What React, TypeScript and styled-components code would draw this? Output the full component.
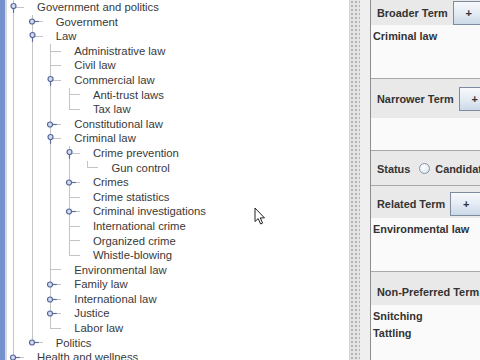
import React from "react";
import styled, { createGlobalStyle } from "styled-components";

type TNode = { label: string; kids?: TNode[]; shut?: boolean };
type Row = {
  label: string;
  rails: boolean[];
  last: boolean;
  handle: "open" | "shut" | null;
};

const tree: TNode[] = [
  {
    label: "Government and politics",
    kids: [
      { label: "Government", shut: true },
      {
        label: "Law",
        kids: [
          { label: "Administrative law" },
          { label: "Civil law" },
          {
            label: "Commercial law",
            kids: [{ label: "Anti-trust laws" }, { label: "Tax law" }],
          },
          { label: "Constitutional law", shut: true },
          {
            label: "Criminal law",
            kids: [
              { label: "Crime prevention", kids: [{ label: "Gun control" }] },
              { label: "Crimes", shut: true },
              { label: "Crime statistics" },
              { label: "Criminal investigations", shut: true },
              { label: "International crime" },
              { label: "Organized crime" },
              { label: "Whistle-blowing" },
            ],
          },
          { label: "Environmental law" },
          { label: "Family law", shut: true },
          { label: "International law", shut: true },
          { label: "Justice", shut: true },
          { label: "Labor law" },
        ],
      },
      { label: "Politics", shut: true },
    ],
  },
  { label: "Health and wellness", shut: true },
];

// top level keeps going above and below the visible part, so it is never "last"
const flatten = (nodes: TNode[], rails: boolean[], out: Row[]) => {
  nodes.forEach((n, i) => {
    const last = rails.length > 0 && i === nodes.length - 1;
    const handle = n.kids ? "open" : n.shut ? "shut" : null;
    out.push({ label: n.label, rails, last, handle });
    if (n.kids) flatten(n.kids, [...rails, !last], out);
  });
  return out;
};

const rows = flatten(tree, [], []);

const Global = createGlobalStyle`
  html, body {
    margin: 0;
    padding: 0;
    overflow: hidden;
    background: #ffffff;
  }
`;

const Frame = styled.div`
  position: relative;
  display: flex;
  width: 480px;
  height: 360px;
  overflow: hidden;
  background: #ffffff;
`;

const TreePane = styled.div`
  flex: 0 0 350px;
  box-sizing: border-box;
  border-left: 5px solid #7592cf;
  border-right: 1px solid #d2d2d2;
  box-shadow: inset 2px 0 0 #dadada;
  padding-left: 2px;
  overflow: hidden;
  background: #ffffff;
  font-family: "Liberation Sans", Arial, sans-serif;
  font-size: 11.3px;
  color: #3a3a3a;
`;

const TreeRow = styled.div`
  display: flex;
  height: 14.6px;
`;

const lineColor = "#c4c4c4";
const rule = `linear-gradient(${lineColor}, ${lineColor})`;

const Rail = styled.span<{ $on: boolean }>`
  flex: 0 0 18.6px;
  background: ${(p) => (p.$on ? `${rule} 6px 0 / 1px 100% no-repeat` : "none")};
`;

const Joint = styled.span<{ $last: boolean }>`
  flex: 0 0 18.6px;
  display: flex;
  align-items: center;
  background: ${(p) => `${rule} 6px 0 / 1px ${p.$last ? "50%" : "100%"} no-repeat`},
    ${rule} 6px 50% / 11px 1px no-repeat;

  svg {
    display: block;
    flex-shrink: 0;
  }
`;

const Label = styled.span`
  margin-left: 11.5px;
  line-height: 14.6px;
  white-space: nowrap;
`;

const Handle: React.FC<{ open: boolean }> = ({ open }) => (
  <svg width="13" height="13" viewBox="0 0 13 13">
    {open ? (
      <>
        <line x1="6.5" y1="7.4" x2="6.5" y2="11.8" stroke="#5d6c9c" strokeWidth="1.2" />
        <circle cx="6.5" cy="5" r="2.5" fill="#d3dcee" stroke="#56669a" strokeWidth="1.2" />
      </>
    ) : (
      <>
        <line x1="8.4" y1="6.5" x2="12.8" y2="6.5" stroke="#5d6c9c" strokeWidth="1.2" />
        <circle cx="6" cy="6.5" r="2.5" fill="#d3dcee" stroke="#56669a" strokeWidth="1.2" />
      </>
    )}
  </svg>
);

const Divider = styled.div`
  flex: 0 0 20px;
  display: flex;
  background: #efefef;
`;

const Grip = styled.div`
  flex: 0 0 10px;
  background-color: #e4e4e4;
  background-image: radial-gradient(circle, #b4b4b4 0.9px, transparent 1.2px);
  background-size: 4px 4px;
`;

const Panel = styled.div`
  flex: 1;
  min-width: 0;
  display: flex;
  flex-direction: column;
  border-left: 1px solid #8e8e8e;
  background: #e9e9e9;
  overflow: hidden;
  font-family: "Liberation Sans", Arial, sans-serif;
  font-size: 10.9px;
  font-weight: bold;
  color: #333333;
`;

const Section = styled.div<{ $grow?: boolean }>`
  display: flex;
  flex-direction: column;
  flex: ${(p) => (p.$grow ? "1" : "0 0 auto")};
  & + & {
    border-top: 1px solid #a8a8a8;
  }
`;

const Header = styled.div<{ $h: number; $pt?: number }>`
  display: flex;
  align-items: center;
  gap: 5px;
  box-sizing: border-box;
  height: ${(p) => p.$h}px;
  padding: ${(p) => p.$pt ?? 0}px 0 0 6px;
  background: #e9e9e9;
  white-space: nowrap;
`;

const AddButton = styled.button`
  flex: 0 0 32px;
  height: 24px;
  padding: 0;
  border: 1px solid #7d8ca0;
  background: linear-gradient(180deg, #f7f9fc 0%, #e2eaf3 55%, #cbd9e8 100%);
  font: bold 11px "Liberation Sans", Arial, sans-serif;
  color: #333333;
`;

const List = styled.div<{ $h?: number }>`
  box-sizing: border-box;
  height: ${(p) => (p.$h ? `${p.$h}px` : "auto")};
  flex: ${(p) => (p.$h ? "0 0 auto" : "1")};
  padding: 2.5px 0 0 2px;
  background: #fafafa;
  line-height: 17px;
  white-space: nowrap;
`;

const Radio = styled.span`
  flex: 0 0 11px;
  height: 11px;
  margin-left: 4px;
  box-sizing: border-box;
  border-radius: 50%;
  border: 1px solid #8897aa;
  background: radial-gradient(circle at 40% 35%, #ffffff 0%, #e6edf5 60%, #cdd9e6 100%);
`;

const Pointer = styled.svg`
  position: absolute;
  left: 254px;
  top: 207px;
  pointer-events: none;
`;

export default function App() {
  return (
    <Frame>
      <Global />
      <TreePane>
        {rows.map((r, i) => (
          <TreeRow key={i}>
            {r.rails.map((on, j) => (
              <Rail key={j} $on={on} />
            ))}
            <Joint $last={r.last}>{r.handle && <Handle open={r.handle === "open"} />}</Joint>
            <Label>{r.label}</Label>
          </TreeRow>
        ))}
      </TreePane>
      <Divider>
        <Grip />
      </Divider>
      <Panel>
        <Section>
          <Header $h={25}>
            Broader Term <AddButton>+</AddButton>
          </Header>
          <List $h={53}>Criminal law</List>
        </Section>
        <Section>
          <Header $h={39}>
            Narrower Term <AddButton>+</AddButton>
          </Header>
          <List $h={32} />
        </Section>
        <Section>
          <Header $h={34} $pt={1}>
            Status <Radio /> Candidate
          </Header>
        </Section>
        <Section>
          <Header $h={32} $pt={4}>
            Related Term <AddButton>+</AddButton>
          </Header>
          <List $h={53}>Environmental law</List>
        </Section>
        <Section $grow>
          <Header $h={33} $pt={6}>
            Non-Preferred Term
          </Header>
          <List>
            <div>Snitching</div>
            <div>Tattling</div>
          </List>
        </Section>
      </Panel>
      <Pointer width="13" height="19" viewBox="0 0 13 19">
        <path
          d="M1 1 L1 14.5 L4.2 11.6 L6.6 17 L8.6 16.1 L6.3 10.9 L10.5 10.9 Z"
          fill="#ffffff"
          stroke="#222222"
          strokeWidth="1"
          strokeLinejoin="round"
        />
      </Pointer>
    </Frame>
  );
}
